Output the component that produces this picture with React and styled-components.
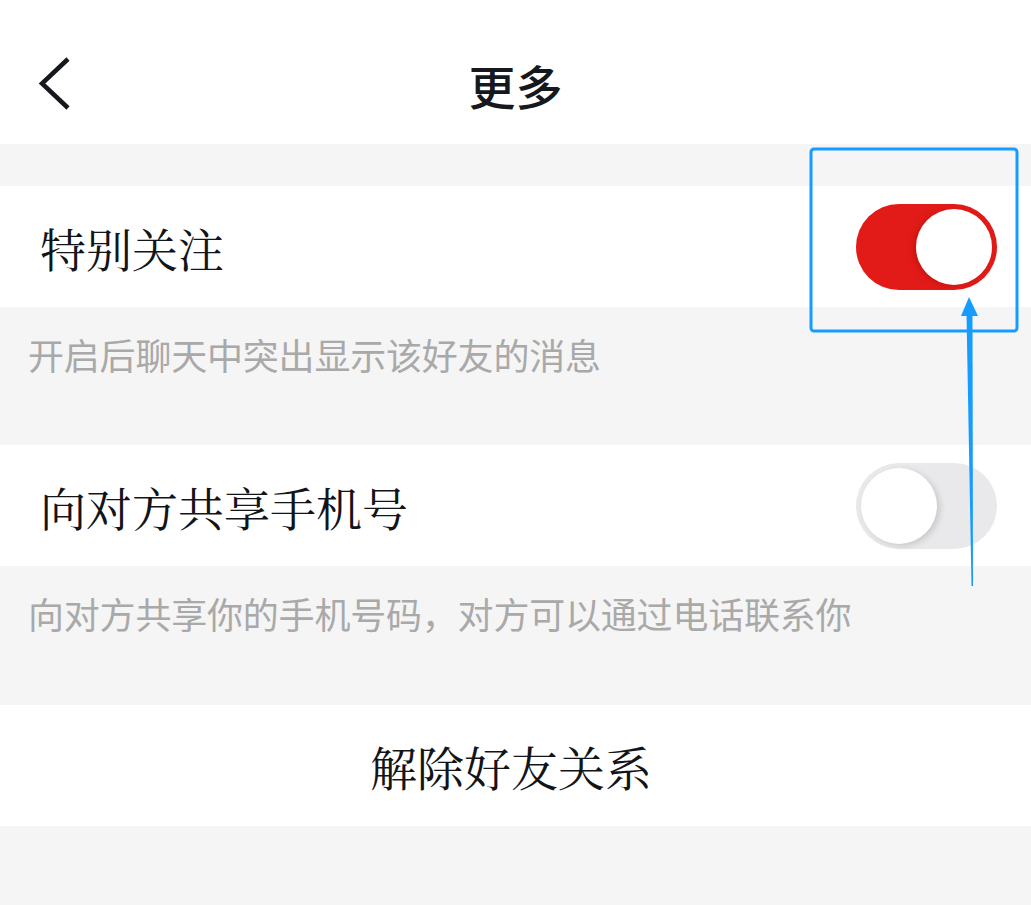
import styled, { createGlobalStyle } from "styled-components";
import { useState } from "react";

const GlobalStyle = createGlobalStyle`
  html, body {
    margin: 0;
    padding: 0;
    background: #f5f5f5;
  }
  body {
    font-family: "Noto Sans CJK SC", "Noto Sans", sans-serif;
    color: #111418;
  }
`;

const Page = styled.div`
  position: relative;
  width: 1031px;
  height: 905px;
  background: #f5f5f5;
  overflow: hidden;
`;

const Header = styled.header`
  height: 144px;
  box-sizing: border-box;
  padding-top: 24px;
  background: #fff;
  display: grid;
  grid-template-columns: 120px 1fr 120px;
  align-items: center;
`;

const BackButton = styled.button`
  border: 0;
  background: none;
  padding: 0 0 0 36px;
  height: 60px;
  display: flex;
  align-items: center;
  cursor: pointer;
`;

const Title = styled.h1`
  margin: 0;
  text-align: center;
  font-size: 47px;
  font-weight: 500;
  line-height: 1;
  color: #15181c;
`;

const Section = styled.section`
  margin-top: ${(p) => p.$gap}px;
`;

const Row = styled.div`
  height: 121px;
  background: #fff;
  display: flex;
  align-items: center;
  justify-content: ${(p) => (p.$center ? "center" : "space-between")};
  padding: ${(p) => (p.$center ? "0 9px 0 0" : "0 34px 0 40px")};
  box-sizing: border-box;
`;

const RowLabel = styled.span`
  font-family: "Noto Serif CJK SC", "Source Han Serif SC", "Noto Sans CJK SC", serif;
  font-size: ${(p) => (p.$center ? "47px" : "46px")};
  line-height: 1;
  color: #121418;
`;

const Hint = styled.p`
  margin: 0;
  height: ${(p) => p.$h}px;
  box-sizing: border-box;
  padding: 29px 0 0 28px;
  font-size: 36px;
  line-height: 36px;
  color: #a9a9a9;
  letter-spacing: -0.2px;
`;

const Track = styled.button`
  width: 141px;
  height: 86px;
  border-radius: 43px;
  border: 0;
  padding: 0 5px;
  box-sizing: border-box;
  display: flex;
  align-items: center;
  justify-content: ${(p) => (p.$on ? "flex-end" : "flex-start")};
  background: ${(p) => (p.$on ? "#e31b18" : "#e9e9eb")};
  cursor: pointer;
`;

const Knob = styled.span`
  width: 76px;
  height: 76px;
  border-radius: 50%;
  background: #fff;
  box-shadow: ${(p) =>
    p.$on
      ? "-3px 1px 6px rgba(120, 0, 0, 0.25)"
      : "3px 2px 6px rgba(0, 0, 0, 0.14)"};
`;

const Overlay = styled.svg`
  position: absolute;
  left: 0;
  top: 0;
  pointer-events: none;
`;

function Toggle({ on, onChange }) {
  return (
    <Track $on={on} onClick={() => onChange(!on)} aria-pressed={on}>
      <Knob $on={on} />
    </Track>
  );
}

function App() {
  const [special, setSpecial] = useState(true);
  const [sharePhone, setSharePhone] = useState(false);

  return (
    <Page>
      <GlobalStyle />
      <Header>
        <BackButton aria-label="返回">
          <svg width="36" height="56" viewBox="0 0 36 56">
            <path
              d="M32 3 L6 27.5 L32 52"
              fill="none"
              stroke="#15181c"
              strokeWidth="4.5"
              strokeLinecap="butt"
              strokeLinejoin="miter"
            />
          </svg>
        </BackButton>
        <Title>更多</Title>
        <div />
      </Header>

      <Section $gap={42}>
        <Row>
          <RowLabel>特别关注</RowLabel>
          <Toggle on={special} onChange={setSpecial} />
        </Row>
        <Hint $h={138}>开启后聊天中突出显示该好友的消息</Hint>
      </Section>

      <Section $gap={0}>
        <Row>
          <RowLabel>向对方共享手机号</RowLabel>
          <Toggle on={sharePhone} onChange={setSharePhone} />
        </Row>
        <Hint $h={139}>向对方共享你的手机号码，对方可以通过电话联系你</Hint>
      </Section>

      <Section $gap={0}>
        <Row $center>
          <RowLabel $center>解除好友关系</RowLabel>
        </Row>
      </Section>

      <Overlay width="1031" height="905" viewBox="0 0 1031 905">
        <rect
          x="811"
          y="149"
          width="206"
          height="182"
          rx="3"
          fill="none"
          stroke="#169cff"
          strokeWidth="3"
        />
        <polygon points="969,297 978,316 961,316" fill="#169cff" />
        <polygon points="966.5,314 972.5,314 973,586 971.5,586" fill="#169cff" />
      </Overlay>
    </Page>
  );
}

export default App;
